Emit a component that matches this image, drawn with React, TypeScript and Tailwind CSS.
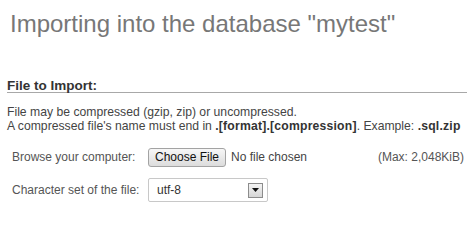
import React from 'react';

export default function App() {
  return (
    <div className="w-[474px] h-[216px] bg-white overflow-hidden font-['Liberation_Sans',Arial,sans-serif]">
      {/* Page title */}
      <h1 className="pl-[10px] pt-[10px] text-[24px] leading-[28px] font-normal text-[#777]">
        Importing into the database "mytest"
      </h1>

      {/* File to import fieldset */}
      <div className="mx-[7px] mt-[41px]">
        <div className="text-[13.5px] leading-[13px] font-bold text-[#333] border-b border-[#a8a8a8]">
          File to Import:
        </div>

        <div className="mt-[12px] text-[12.2px] leading-[14px] text-[#444]">
          <p>File may be compressed (gzip, zip) or uncompressed.</p>
          <p>
            A compressed file's name must end in <b className="text-[#333] tracking-[0.2px]">.[format].[compression]</b>. Example:{' '}
            <b className="text-[#333] tracking-[0.2px]">.sql.zip</b>
          </p>
        </div>

        {/* Browse row */}
        <div className="mt-[14px] flex items-center h-[20px] pl-[5px] pr-[3px] text-[12px] text-[#555]">
          <span className="w-[136px] shrink-0">Browse your computer:</span>
          <span className="h-[19px] w-[78px] flex items-center justify-center border border-[#a3a3a3] rounded-[3px] bg-gradient-to-b from-[#f7f7f7] to-[#dcdcdc] text-[#111] text-[12px]">
            Choose File
          </span>
          <span className="ml-[5px] text-[#444]">No file chosen</span>
          <span className="ml-auto text-[#555]">(Max: 2,048KiB)</span>
        </div>

        {/* Charset row */}
        <div className="mt-[11px] flex items-center pl-[5px] text-[12px] text-[#555]">
          <span className="w-[136px] shrink-0">Character set of the file:</span>
          <div className="w-[120px] h-[24px] flex items-center justify-between border border-[#c8c8c8] rounded-[2px] bg-white pl-[8px] pr-[4px]">
            <span className="text-[#333]">utf-8</span>
            <span className="w-[15px] h-[15px] flex items-center justify-center border border-[#8c8c8c] bg-gradient-to-b from-[#f4f4f4] to-[#d6d6d6]">
              <svg width="7" height="4" viewBox="0 0 7 4">
                <polygon points="0,0 7,0 3.5,4" fill="#111" />
              </svg>
            </span>
          </div>
        </div>
      </div>
    </div>
  );
}
